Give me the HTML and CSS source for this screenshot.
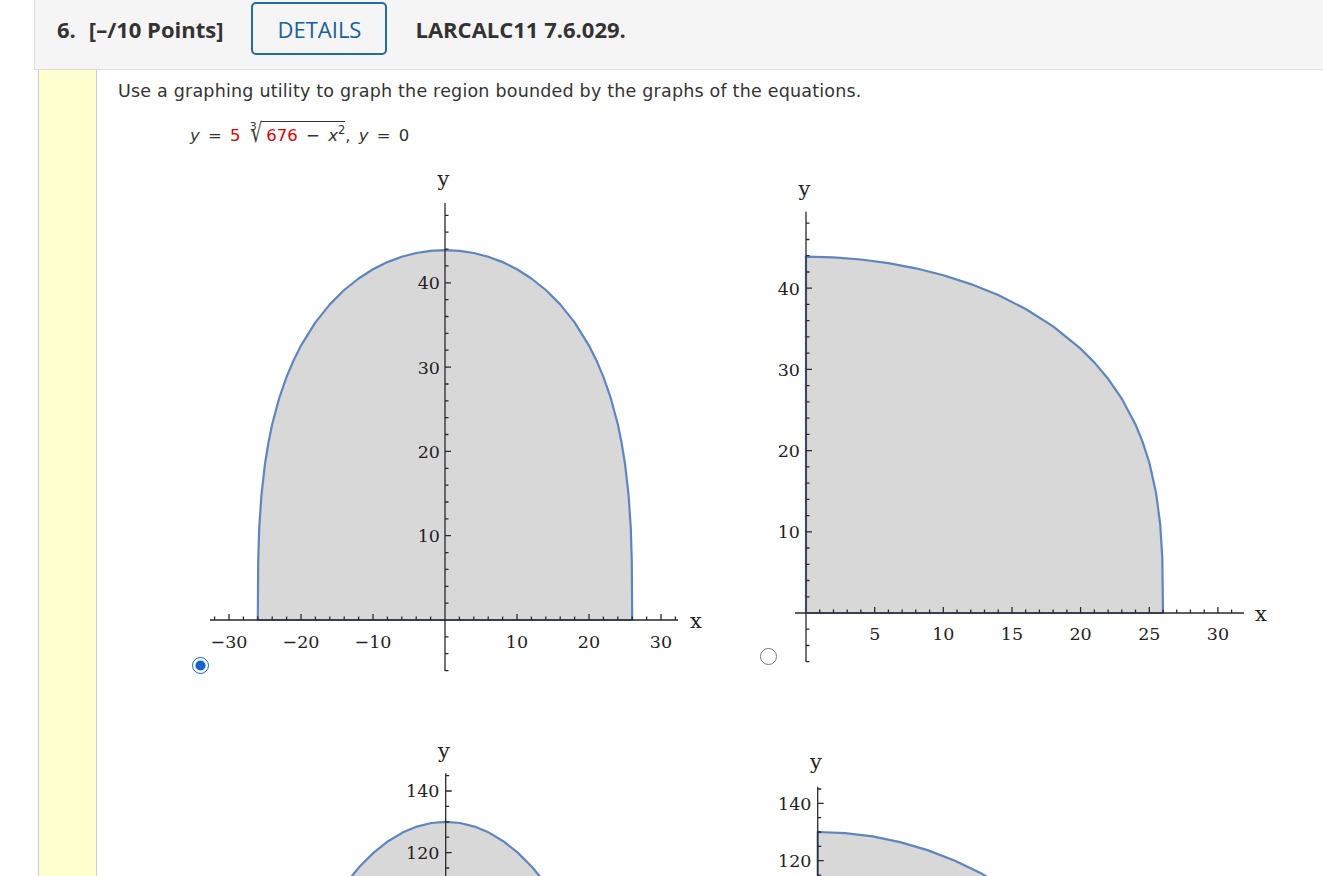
FILE: index.html
```html
<!DOCTYPE html>
<html lang="en">
<head>
<meta charset="utf-8">
<title>LARCALC11 7.6.029.</title>
<link rel="stylesheet" href="styles.css">
</head>
<body>
<div class="question">
  <div class="qhead">
    <span class="qnum">6.</span>
    <span class="pts">[–/10 Points]</span>
    <button class="details" type="button">DETAILS</button>
    <span class="code">LARCALC11 7.6.029.</span>
  </div>
  <div class="qbody">
    <div class="side"></div>
    <div class="content">
      <p class="prompt">Use a graphing utility to graph the region bounded by the graphs of the equations.</p>
      <div class="eq"><i>y</i> = <span class="red">5</span> <span class="root"><span class="idx">3</span><span class="rad">√</span><span class="radicand"><span class="red">676</span> − <i>x</i><sup class="sq">2</sup></span></span>, <i>y</i> = 0</div>

      <div class="options">
        <label class="opt">
          <input type="radio" name="q6" checked>
          <svg width="510" height="507" viewBox="210 168 510 507">
            <path class="region" d="M257.8,620 L258.2,562.1 L259.2,528.1 L261.4,495.5 L265,463.7 L268.6,441.7 L272.2,424.3 L279.4,397.5 L286.6,376.9 L293.8,359.9 L301,345.6 L315.4,322.4 L329.8,304.4 L344.2,290 L358.6,278.5 L373,269.3 L387.4,262.1 L401.8,256.8 L416.2,253 L430.6,250.8 L445,250.1 L459.4,250.8 L473.8,253 L488.2,256.8 L502.6,262.1 L517,269.3 L531.4,278.5 L545.8,290 L560.2,304.4 L574.6,322.4 L589,345.6 L596.2,359.9 L603.4,376.9 L610.6,397.5 L617.8,424.3 L621.4,441.7 L625,463.7 L628.6,495.5 L630.8,528.1 L631.8,562.1 L632.2,620 Z"/>
            <path class="axis" d="M210,620H678M445,203V671"/>
            <path class="axis" d="M214.6,620v-3.5M243.4,620v-3.5M257.8,620v-3.5M272.2,620v-3.5M286.6,620v-3.5M315.4,620v-3.5M329.8,620v-3.5M344.2,620v-3.5M358.6,620v-3.5M387.4,620v-3.5M401.8,620v-3.5M416.2,620v-3.5M430.6,620v-3.5M459.4,620v-3.5M473.8,620v-3.5M488.2,620v-3.5M502.6,620v-3.5M531.4,620v-3.5M545.8,620v-3.5M560.2,620v-3.5M574.6,620v-3.5M603.4,620v-3.5M617.8,620v-3.5M632.2,620v-3.5M646.6,620v-3.5M675.4,620v-3.5"/>
            <path class="axis" d="M229,620v-6M301,620v-6M373,620v-6M517,620v-6M589,620v-6M661,620v-6"/>
            <path class="axis" d="M445,670.6h3.5M445,653.7h3.5M445,636.9h3.5M445,603.1h3.5M445,586.3h3.5M445,569.4h3.5M445,552.6h3.5M445,518.8h3.5M445,502h3.5M445,485.1h3.5M445,468.3h3.5M445,434.5h3.5M445,417.7h3.5M445,400.8h3.5M445,384h3.5M445,350.2h3.5M445,333.4h3.5M445,316.5h3.5M445,299.7h3.5M445,265.9h3.5M445,249.1h3.5M445,232.2h3.5M445,215.4h3.5"/>
            <path class="axis" d="M445,535.7h6M445,451.4h6M445,367.1h6M445,282.8h6"/>
            <text class="tl" x="229" y="648" text-anchor="middle">−30</text>
            <text class="tl" x="301" y="648" text-anchor="middle">−20</text>
            <text class="tl" x="373" y="648" text-anchor="middle">−10</text>
            <text class="tl" x="517" y="648" text-anchor="middle">10</text>
            <text class="tl" x="589" y="648" text-anchor="middle">20</text>
            <text class="tl" x="661" y="648" text-anchor="middle">30</text>
            <text class="tl" x="440" y="289.2" text-anchor="end">40</text>
            <text class="tl" x="440" y="373.5" text-anchor="end">30</text>
            <text class="tl" x="440" y="457.8" text-anchor="end">20</text>
            <text class="tl" x="440" y="542.1" text-anchor="end">10</text>
            <text class="al" x="443.5" y="186" text-anchor="middle">y</text>
            <text class="al" x="696" y="627.5" text-anchor="middle">x</text>
          </svg>
        </label>

        <label class="opt">
          <input type="radio" name="q6">
          <svg width="512" height="498" viewBox="778 168 512 498">
            <path class="region" d="M806,613 L806,256.7 L833.5,257.3 L860.9,259.5 L888.4,263.1 L915.8,268.3 L943.3,275.2 L970.8,284.1 L998.2,295.1 L1025.7,309 L1053.1,326.4 L1080.6,348.7 L1094.3,362.4 L1108.1,378.8 L1121.8,398.7 L1135.5,424.5 L1142.4,441.3 L1149.3,462.5 L1156.1,493.1 L1160.2,524.5 L1162.3,557.2 L1163,613 Z"/>
            <path class="axis" d="M795,613H1244M806,211.7V662"/>
            <path class="axis" d="M819.7,613v-3.5M833.5,613v-3.5M847.2,613v-3.5M860.9,613v-3.5M888.4,613v-3.5M902.1,613v-3.5M915.8,613v-3.5M929.6,613v-3.5M957,613v-3.5M970.8,613v-3.5M984.5,613v-3.5M998.2,613v-3.5M1025.7,613v-3.5M1039.4,613v-3.5M1053.1,613v-3.5M1066.9,613v-3.5M1094.3,613v-3.5M1108.1,613v-3.5M1121.8,613v-3.5M1135.5,613v-3.5M1163,613v-3.5M1176.7,613v-3.5M1190.4,613v-3.5M1204.2,613v-3.5M1231.6,613v-3.5"/>
            <path class="axis" d="M874.7,613v-6M943.3,613v-6M1012,613v-6M1080.6,613v-6M1149.3,613v-6M1217.9,613v-6"/>
            <path class="axis" d="M806,661.7h3.5M806,645.5h3.5M806,629.2h3.5M806,596.8h3.5M806,580.5h3.5M806,564.3h3.5M806,548h3.5M806,515.6h3.5M806,499.3h3.5M806,483.1h3.5M806,466.8h3.5M806,434.4h3.5M806,418.1h3.5M806,401.9h3.5M806,385.6h3.5M806,353.2h3.5M806,336.9h3.5M806,320.7h3.5M806,304.4h3.5M806,272h3.5M806,255.7h3.5M806,239.5h3.5M806,223.2h3.5"/>
            <path class="axis" d="M806,531.8h6M806,450.6h6M806,369.4h6M806,288.2h6"/>
            <text class="tl" x="874.7" y="639.5" text-anchor="middle">5</text>
            <text class="tl" x="943.3" y="639.5" text-anchor="middle">10</text>
            <text class="tl" x="1012" y="639.5" text-anchor="middle">15</text>
            <text class="tl" x="1080.6" y="639.5" text-anchor="middle">20</text>
            <text class="tl" x="1149.3" y="639.5" text-anchor="middle">25</text>
            <text class="tl" x="1217.9" y="639.5" text-anchor="middle">30</text>
            <text class="tl" x="800" y="294.6" text-anchor="end">40</text>
            <text class="tl" x="800" y="375.8" text-anchor="end">30</text>
            <text class="tl" x="800" y="457" text-anchor="end">20</text>
            <text class="tl" x="800" y="538.2" text-anchor="end">10</text>
            <text class="al" x="804.5" y="196" text-anchor="middle">y</text>
            <text class="al" x="1261" y="620.5" text-anchor="middle">x</text>
          </svg>
        </label>

        <label class="opt">
          <input type="radio" name="q6">
          <svg width="510" height="507" viewBox="210 735 510 507">
            <path class="region" d="M258.5,1222.2 L259.9,1172.6 L265.7,1112.2 L272.9,1068.2 L287.3,1008 L301.7,966.3 L316.1,933.3 L330.5,906.6 L344.9,884.8 L359.3,867 L373.7,852.6 L388.1,841.2 L402.5,832.6 L416.9,826.6 L431.3,823 L445.7,821.8 L460.1,823 L474.5,826.6 L488.9,832.6 L503.3,841.2 L517.7,852.6 L532.1,867 L546.5,884.8 L560.9,906.6 L575.3,933.3 L589.7,966.3 L604.1,1008 L618.5,1068.2 L625.7,1112.2 L631.5,1172.6 L632.9,1222.2 Z"/>
            <path class="axis" d="M210,1222.2H678M445.7,773.3V1240"/>
            <path class="axis" d="M445.7,775.6h3.5M445.7,806.4h3.5M445.7,821.8h3.5M445.7,837.2h3.5M445.7,868h3.5M445.7,883.4h3.5M445.7,898.8h3.5M445.7,929.6h3.5M445.7,945h3.5M445.7,960.4h3.5"/>
            <path class="axis" d="M445.7,791h6M445.7,852.6h6M445.7,914.2h6M445.7,975.8h6"/>
            <text class="tl" x="439.5" y="797.4" text-anchor="end">140</text>
            <text class="tl" x="439.5" y="859" text-anchor="end">120</text>
            <text class="tl" x="439.5" y="920.6" text-anchor="end">100</text>
            <text class="tl" x="439.5" y="982.2" text-anchor="end">80</text>
            <text class="al" x="444" y="757.6" text-anchor="middle">y</text>
          </svg>
        </label>

        <label class="opt">
          <input type="radio" name="q6">
          <svg width="512" height="498" viewBox="778 735 512 498">
            <path class="region" d="M817.7,1205.1 L817.7,832 L845.2,833.1 L872.6,836.4 L900.1,842.1 L927.5,850.1 L955,860.7 L982.5,874.1 L1009.9,890.7 L1037.4,911 L1064.8,935.9 L1092.3,966.7 L1119.8,1006.3 L1147.2,1061.6 L1160.9,1102.6 L1171.9,1158.9 L1174.7,1205.1 Z"/>
            <path class="axis" d="M806,1205.1H1256M817.7,786.7V1230"/>
            <path class="axis" d="M817.7,789h3.5M817.7,817.7h3.5M817.7,832h3.5M817.7,846.4h3.5M817.7,875.1h3.5M817.7,889.4h3.5M817.7,903.8h3.5M817.7,932.5h3.5M817.7,946.8h3.5"/>
            <path class="axis" d="M817.7,803.3h6M817.7,860.7h6M817.7,918.1h6"/>
            <text class="tl" x="811.5" y="809.7" text-anchor="end">140</text>
            <text class="tl" x="811.5" y="867.1" text-anchor="end">120</text>
            <text class="tl" x="811.5" y="924.5" text-anchor="end">100</text>
            <text class="al" x="816" y="769" text-anchor="middle">y</text>
          </svg>
        </label>
      </div>
    </div>
  </div>
</div>
</body>
</html>
```

FILE: styles.css
```css
body {
  margin: 0;
  background: #ffffff;
  color: #333333;
  font-family: "DejaVu Sans", Verdana, sans-serif;
}

.question {
  margin-left: 34px;
}

.qhead {
  display: flex;
  align-items: center;
  height: 53px;
  padding: 2px 0 14px 22px;
  background: #f5f5f5;
  border-left: 1px solid #dddddd;
  border-bottom: 1px solid #dddddd;
  font-family: "Open Sans", "Liberation Sans", sans-serif;
  font-size: 22px;
  font-weight: 700;
  color: #333333;
}

.qnum {
  margin-right: 13px;
}

.pts {
  margin-right: 28px;
}

.details {
  box-sizing: border-box;
  width: 136px;
  height: 53px;
  margin: 0 28px 0 0;
  padding: 0;
  border: 2px solid #236ba5;
  border-radius: 5px;
  background: transparent;
  color: #17609a;
  font-family: "Open Sans", "Liberation Sans", sans-serif;
  font-size: 22px;
  font-weight: 400;
}

.qbody {
  display: flex;
  margin-left: 4px;
}

.side {
  flex: none;
  width: 57px;
  background: #ffffd0;
  border-left: 1px solid #cccccc;
  border-right: 1px solid #cccccc;
}

.content {
  flex: 1;
  padding: 11px 0 0 21px;
}

.prompt {
  margin: 0;
  font-size: 17.5px;
  letter-spacing: 0.2px;
  line-height: 20px;
}

.eq {
  box-sizing: border-box;
  height: 47px;
  padding: 20px 0 0 72px;
  font-size: 16.5px;
  word-spacing: 3px;
  line-height: 24px;
  white-space: nowrap;
}

.red {
  color: #e60000;
}

.root {
  display: inline-block;
}

.idx {
  display: inline-block;
  font-size: 11px;
  line-height: 10px;
  vertical-align: 11px;
  margin-right: -6px;
  margin-left: 1px;
}

.rad {
  display: inline-block;
  font-size: 18px;
  line-height: 16px;
  transform: scaleY(1.45);
  transform-origin: 50% 75%;
}

.radicand {
  display: inline-block;
  line-height: 16px;
  padding: 6px 0 0 4px;
  border-top: 1px solid #333333;
}

.sq {
  font-size: 11.5px;
  line-height: 0;
  vertical-align: 7px;
}

.options {
  display: grid;
  grid-template-columns: 568px 1fr;
  row-gap: 60px;
  margin: 20px 0 0 74px;
}

.opt {
  display: flex;
  align-items: flex-end;
  align-self: start;
}

.opt input {
  flex: none;
  width: 17px;
  height: 17px;
  margin: 0 1px 1px 0;
  accent-color: #1565d0;
}

.opt svg {
  display: block;
  flex: none;
}

.region {
  fill: #d8d8d8;
  stroke: #5f85c0;
  stroke-width: 2.2;
  stroke-linejoin: round;
}

.axis {
  fill: none;
  stroke: #2a2a2a;
  stroke-width: 1.3;
}

.tl {
  font-family: "DejaVu Serif", "Liberation Serif", serif;
  font-size: 17.5px;
  fill: #222222;
}

.al {
  font-family: "DejaVu Serif", "Liberation Serif", serif;
  font-size: 21px;
  fill: #222222;
}
```
